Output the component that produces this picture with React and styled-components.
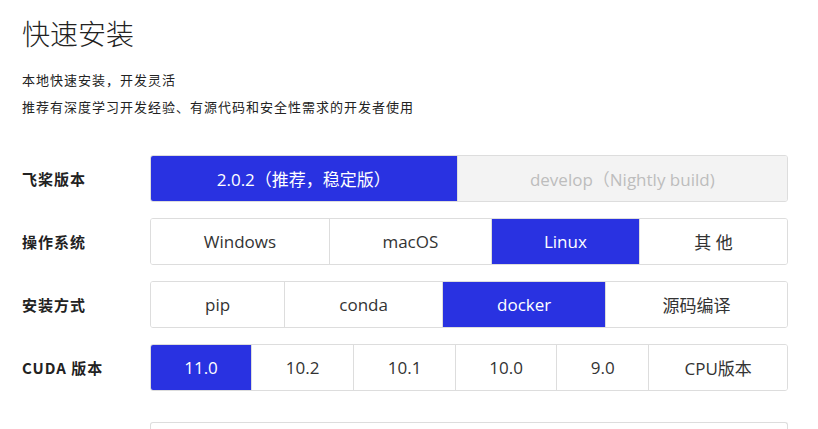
import React, { useState } from "react";
import styled, { createGlobalStyle } from "styled-components";

const GlobalStyle = createGlobalStyle`
  body {
    margin: 0;
    background: #fff;
    font-family: "Open Sans", "Noto Sans CJK SC", sans-serif;
    color: #333;
  }
`

const Page = styled.div`
  padding: 11px 0 0 22px;
  width: 766px;
`
const Title = styled.h1`
  margin: 0;
  font-size: 28px;
  font-weight: 300;
  line-height: 44px;
  color: #222;
  font-family: "Noto Sans CJK SC", sans-serif;
`
const Sub = styled.p`
  margin: 0;
  font-size: 13px;
  letter-spacing: 1px;
  line-height: 27px;
  color: #222;
  font-family: "Noto Sans CJK SC", sans-serif;
`
const Intro = styled.div`
  margin-top: 11px;
`
const Rows = styled.div`
  margin-top: 35px;
  display: flex;
  flex-direction: column;
  gap: 16px;
`
const Row = styled.div`
  display: flex;
  align-items: center;
`
const Label = styled.div`
  width: 128px;
  flex: none;
  font-size: 15px;
  letter-spacing: 1px;
  font-weight: 600;
  color: #222;
  font-family: "Noto Sans CJK SC", sans-serif;
`
const Group = styled.div`
  display: flex;
  width: 638px;
  height: 47px;
  border: 1px solid #ddd;
  border-radius: 3px;
  box-sizing: border-box;
  overflow: hidden;
`
const Option = styled.button`
  flex: ${p => p.$w} 1 0;
  border: none;
  border-left: 1px solid #ddd;
  &:first-child { border-left: none; }
  background: ${p => (p.$active ? "#2932e1" : p.$disabled ? "#f3f3f3" : "#fff")};
  color: ${p => (p.$active ? "#fff" : p.$disabled ? "#bdbdbd" : "#333")};
  font-family: "Open Sans", "Noto Sans CJK SC", sans-serif;
  font-size: 17px;
  padding: 0;
  margin: ${p => (p.$active ? "-1px 0" : "0")};
  cursor: pointer;
`
const Next = styled.div`
  margin: 15px 0 0 128px;
  width: 638px;
  height: 20px;
  border: 1px solid #ddd;
  border-bottom: none;
  box-sizing: border-box;
  border-radius: 3px 3px 0 0;
`

const rows = [
  { label: "飞桨版本", opts: [["2.0.2（推荐，稳定版）", 307], ["develop（Nightly build)", 331, true]], def: 0 },
  { label: "操作系统", opts: [["Windows", 179], ["macOS", 162], ["Linux", 148], ["其 他", 148]], def: 2 },
  { label: "安装方式", opts: [["pip", 134], ["conda", 158], ["docker", 163], ["源码编译", 182]], def: 2 },
  { label: "CUDA 版本", opts: [["11.0", 101], ["10.2", 102], ["10.1", 102], ["10.0", 101], ["9.0", 92], ["CPU版本", 139]], def: 0 },
]

export default function App() {
  const [sel, setSel] = useState(rows.map(r => r.def))

  return (
    <Page>
      <GlobalStyle />
      <Title>快速安装</Title>
      <Intro>
        <Sub>本地快速安装，开发灵活</Sub>
        <Sub>推荐有深度学习开发经验、有源代码和安全性需求的开发者使用</Sub>
      </Intro>
      <Rows>
        {rows.map((r, i) => (
          <Row key={r.label}>
            <Label>{r.label}</Label>
            <Group>
              {r.opts.map(([text, w, disabled], j) => (
                <Option
                  key={text}
                  $w={w}
                  $active={sel[i] === j}
                  $disabled={disabled}
                  onClick={() => !disabled && setSel(sel.map((s, k) => (k === i ? j : s)))}
                >
                  {text}
                </Option>
              ))}
            </Group>
          </Row>
        ))}
        <Next />
      </Rows>
    </Page>
  )
}
